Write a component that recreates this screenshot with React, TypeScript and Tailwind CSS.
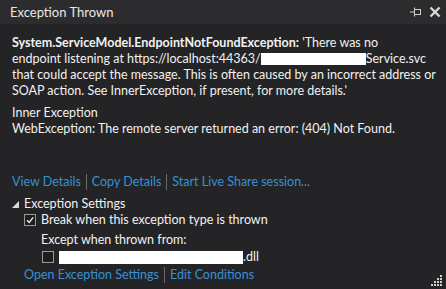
import React from 'react';

const font = { fontFamily: 'Lato, "Open Sans", sans-serif' };

const Sep = () => <span className="mx-[5px] inline-block h-[16px] w-px bg-[#6b6b6b]" />;

const Checkbox = ({ checked }: { checked?: boolean }) => (
  <span className="inline-flex h-[12px] w-[12px] items-center justify-center border border-[#9a9a9a] bg-[#1e1e1e]">
    {checked && (
      <svg width="10" height="10" viewBox="0 0 10 10">
        <path d="M2 5.2 L4.2 7.4 L8.2 2.4" stroke="#f1f1f1" strokeWidth="1.4" fill="none" />
      </svg>
    )}
  </span>
);

export default function App() {
  return (
    <div className="relative h-[289px] w-[446px] overflow-hidden bg-[#242426] text-[12.5px] leading-[16px] text-[#f1f1f1]" style={font}>
      {/* title bar */}
      <div className="flex h-[24px] items-center justify-between bg-[#2c2c2f] pl-[10px] pr-[5px]">
        <span className="text-[13px] text-[#e8e8e8]">Exception Thrown</span>
        <div className="flex items-center gap-[7px]">
          <svg width="12" height="10" viewBox="0 0 12 10">
            <path d="M0 5 H4" stroke="#cfcfcf" strokeWidth="1" />
            <rect x="4.5" y="2.5" width="6" height="5" stroke="#cfcfcf" strokeWidth="1" fill="none" />
            <path d="M4.5 0.5 V9.5" stroke="#cfcfcf" strokeWidth="1" />
          </svg>
          <svg width="12" height="12" viewBox="0 0 12 12">
            <path d="M1.5 1.5 L10.5 10.5 M10.5 1.5 L1.5 10.5" stroke="#d8d8d8" strokeWidth="2.4" />
          </svg>
        </div>
      </div>

      <div className="px-[12px] pt-[11px]">
        <div className="whitespace-nowrap">
          <div>
            <span className="font-bold">System.ServiceModel.EndpointNotFoundException:</span> 'There was no
          </div>
          <div className="flex items-center">
            <span>endpoint listening at https://localhost:44363/</span>
            <span className="inline-block h-[12px] w-[105px] bg-white" />
            <span>Service.svc</span>
          </div>
          <div>that could accept the message. This is often caused by an incorrect address or</div>
          <div>SOAP action. See InnerException, if present, for more details.'</div>
        </div>

        <div className="mt-[6px]">Inner Exception</div>
        <div>WebException: The remote server returned an error: (404) Not Found.</div>

        <div className="mt-[37px] flex items-center text-[#3791d4]">
          <span>View Details</span>
          <Sep />
          <span>Copy Details</span>
          <Sep />
          <span>Start Live Share session...</span>
        </div>

        <div className="mt-[6px] flex items-center">
          <svg width="7" height="7" viewBox="0 0 7 7" className="mr-[5px]">
            <path d="M7 0 V7 H0 Z" fill="#d8d8d8" />
          </svg>
          <span>Exception Settings</span>
        </div>

        <div className="pl-[12px]">
          <div className="flex items-center gap-[5px]">
            <Checkbox checked />
            <span>Break when this exception type is thrown</span>
          </div>
          <div className="mt-[4px] pl-[17px]">Except when thrown from:</div>
          <div className="mt-[1px] flex items-center pl-[18px]">
            <Checkbox />
            <span className="ml-[5px] inline-block h-[13px] w-[184px] bg-white" />
            <span>.dll</span>
          </div>
          <div className="mt-[2px] flex items-center text-[#3791d4]">
            <span>Open Exception Settings</span>
            <Sep />
            <span>Edit Conditions</span>
          </div>
        </div>
      </div>

      {/* resize grip */}
      <svg width="12" height="12" viewBox="0 0 12 12" className="absolute bottom-[2px] right-[3px]">
        {[[9, 0], [6, 3], [9, 3], [3, 6], [6, 6], [9, 6], [0, 9], [3, 9], [6, 9], [9, 9]].map(([x, y]) => (
          <rect key={`${x}-${y}`} x={x} y={y} width="2" height="2" fill="#d0d0d0" />
        ))}
      </svg>
    </div>
  );
}
